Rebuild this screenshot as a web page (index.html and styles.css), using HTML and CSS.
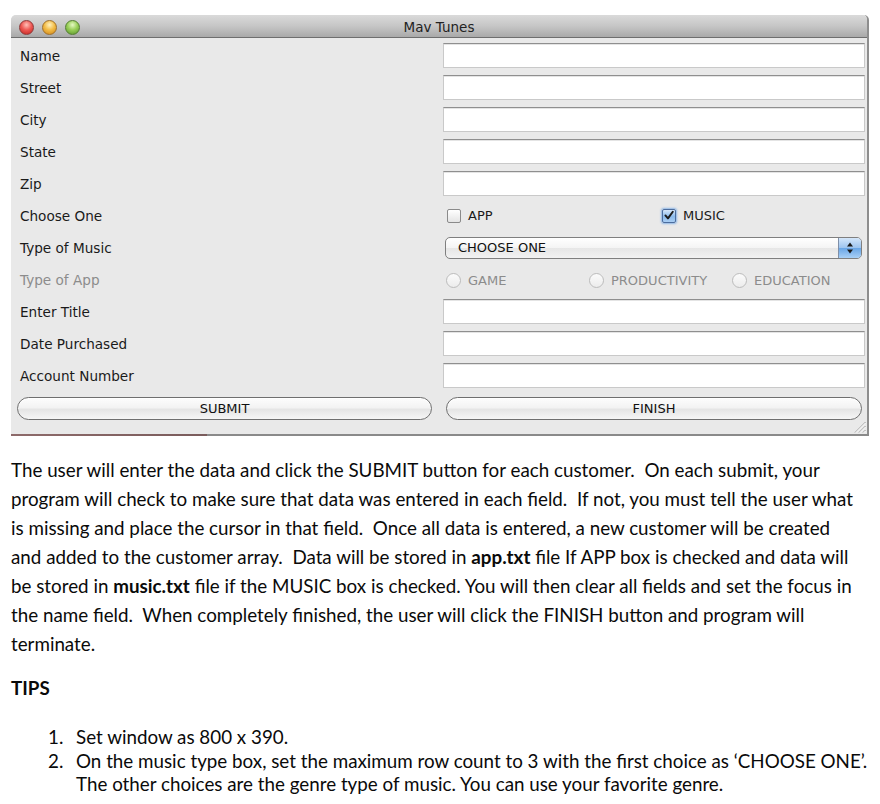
FILE: index.html
```
<!DOCTYPE html>
<html lang="en">
<head>
<meta charset="utf-8">
<title>Mav Tunes</title>
<link rel="stylesheet" href="styles.css">
</head>
<body>
<div class="page">
  <div class="window">
    <div class="titlebar">
      <div class="lights">
        <span class="light red"></span>
        <span class="light yellow"></span>
        <span class="light green"></span>
      </div>
      <div class="title">Mav Tunes</div>
      <div></div>
    </div>
    <div class="form">
      <div class="row"><span class="lbl">Name</span><div class="field"></div></div>
      <div class="row"><span class="lbl">Street</span><div class="field"></div></div>
      <div class="row"><span class="lbl">City</span><div class="field"></div></div>
      <div class="row"><span class="lbl">State</span><div class="field"></div></div>
      <div class="row"><span class="lbl">Zip</span><div class="field"></div></div>
      <div class="row">
        <span class="lbl">Choose One</span>
        <div class="checks">
          <span class="opt"><span class="cb"></span>APP</span>
          <span class="opt"><span class="cb checked"><svg viewBox="0 0 13 13" width="13" height="13"><path d="M2.6 6.4 L5.4 9.6 L10.6 2.4" fill="none" stroke="#1c1c1c" stroke-width="2.1" stroke-linecap="round" stroke-linejoin="round"/></svg></span>MUSIC</span>
        </div>
      </div>
      <div class="row">
        <span class="lbl">Type of Music</span>
        <div class="combo">
          <span class="combo-text">CHOOSE ONE</span>
          <span class="stepper"><svg viewBox="0 0 22 20" width="22" height="20"><path d="M11 4.5 L14 8.5 L8 8.5 Z" fill="#1a1a1a"/><path d="M11 15.5 L14 11.5 L8 11.5 Z" fill="#1a1a1a"/></svg></span>
        </div>
      </div>
      <div class="row">
        <span class="lbl disabled">Type of App</span>
        <div class="radios">
          <span class="opt disabled"><span class="rb"></span>GAME</span>
          <span class="opt disabled"><span class="rb"></span>PRODUCTIVITY</span>
          <span class="opt disabled"><span class="rb"></span>EDUCATION</span>
        </div>
      </div>
      <div class="row"><span class="lbl">Enter Title</span><div class="field"></div></div>
      <div class="row"><span class="lbl">Date Purchased</span><div class="field"></div></div>
      <div class="row"><span class="lbl">Account Number</span><div class="field"></div></div>
      <div class="buttons">
        <button class="btn" type="button">SUBMIT</button>
        <button class="btn" type="button">FINISH</button>
      </div>
    </div>
    <svg class="grip" viewBox="0 0 12 12" width="12" height="12">
      <path d="M11.5 1 L1 11.5 M11.5 5 L5 11.5 M11.5 9 L9 11.5" stroke="#9a9a9a" stroke-width="1"/>
      <path d="M11.5 2 L2 11.5 M11.5 6 L6 11.5 M11.5 10 L10 11.5" stroke="#fafafa" stroke-width="1"/>
    </svg>
  </div>
  <div class="desk-strip"></div>

  <div class="doc">
    <div class="para">
      <div class="line">The user will enter the data and click the SUBMIT button for each customer.  On each submit, your</div>
      <div class="line">program will check to make sure that data was entered in each field.  If not, you must tell the user what</div>
      <div class="line">is missing and place the cursor in that field.  Once all data is entered, a new customer will be created</div>
      <div class="line">and added to the customer array.  Data will be stored in <b>app.txt</b> file If APP box is checked and data will</div>
      <div class="line">be stored in <b>music.txt</b> file if the MUSIC box is checked. You will then clear all fields and set the focus in</div>
      <div class="line">the name field.  When completely finished, the user will click the FINISH button and program will</div>
      <div class="line">terminate.</div>
    </div>
    <div class="tips">TIPS</div>
    <ol class="list">
      <li class="item"><span class="num">1.</span><span class="txt">Set window as 800 x 390.</span></li>
      <li class="item"><span class="num">2.</span><span class="txt"><span class="line">On the music type box, set the maximum row count to 3 with the first choice as ‘CHOOSE ONE’.</span><span class="line">The other choices are the genre type of music. You can use your favorite genre.</span></span></li>
    </ol>
  </div>
</div>
</body>
</html>
```
FILE: styles.css
```
html, body {
  margin: 0;
  padding: 0;
  background: #ffffff;
}

.page {
  padding: 15px 0 0 11px;
}

.window {
  position: relative;
  width: 856px;
  background: #e9e9e9;
  border-right: 2px solid #8e8e8e;
  border-radius: 5px 5px 0 0;
  font-family: "DejaVu Sans", sans-serif;
  font-size: 13px;
  color: #1a1a1a;
}

.titlebar {
  height: 22px;
  border-bottom: 1px solid #6e6e6e;
  border-radius: 5px 5px 0 0;
  background: linear-gradient(#dadada, #c6c6c6 50%, #a9a9a9);
  display: grid;
  grid-template-columns: 1fr auto 1fr;
  align-items: center;
}

.lights {
  display: flex;
  gap: 8px;
  padding-left: 8px;
  padding-top: 2px;
}

.light {
  width: 15px;
  height: 15px;
  border-radius: 50%;
  box-sizing: border-box;
}

.light.red {
  background: radial-gradient(circle at 50% 30%, #ffc0b8 0, #ee5a55 45%, #c0201b 100%);
  border: 1px solid #8f3a3a;
}

.light.yellow {
  background: radial-gradient(circle at 50% 30%, #fff2c0 0, #f3bd48 45%, #cf8416 100%);
  border: 1px solid #a0702a;
}

.light.green {
  background: radial-gradient(circle at 50% 30%, #e6f8c4 0, #99cf58 45%, #58922a 100%);
  border: 1px solid #557f33;
}

.title {
  font-size: 13.5px;
  color: #222;
  padding-top: 2px;
}

.form {
  padding: 5px 0 14px 0;
  display: flex;
  flex-direction: column;
  gap: 7px;
}

.row {
  display: grid;
  grid-template-columns: 432px 422px;
  height: 25px;
  align-items: center;
}

.lbl {
  padding-left: 9px;
  padding-top: 1px;
  font-size: 13.6px;
}

.lbl.disabled {
  color: #8c8c8c;
}

.field {
  height: 25px;
  box-sizing: border-box;
  background: #ffffff;
  border: 1px solid #c9c9c9;
  border-top-color: #8f8f8f;
  box-shadow: inset 0 1px 0 #e4e4e4;
}

.checks {
  display: grid;
  grid-template-columns: 215px auto;
  padding-left: 4px;
  align-items: center;
}

.opt {
  display: flex;
  align-items: center;
  gap: 7px;
}

.opt.disabled {
  color: #8c8c8c;
}

.cb {
  width: 14px;
  height: 14px;
  box-sizing: border-box;
  border: 1px solid #8a8a8a;
  border-radius: 2px;
  background: linear-gradient(#ffffff, #e4e4e4);
  display: flex;
  align-items: center;
  justify-content: center;
}

.cb.checked {
  border-color: #4c6d9e;
  background: linear-gradient(#d6e7fa, #8bbbec 55%, #a9cdf3);
  box-shadow: 0 0 2px 1px #8db6e6;
}

.combo {
  margin-left: 2px;
  width: 417px;
  height: 22px;
  box-sizing: border-box;
  border: 1px solid #7f7f7f;
  border-radius: 5px;
  background: linear-gradient(#ffffff, #f4f4f4 50%, #e6e6e6 51%, #f2f2f2);
  display: flex;
  align-items: center;
  overflow: hidden;
}

.combo-text {
  flex: 1;
  padding-left: 12px;
  color: #111;
}

.stepper {
  width: 22px;
  height: 20px;
  border-left: 1px solid #7f8fa8;
  background: linear-gradient(#d4e6fa, #9ec5ef 48%, #6aa6e6 52%, #a8d0f6);
  display: flex;
}

.radios {
  display: grid;
  grid-template-columns: 143px 143px auto;
  padding-left: 3px;
  padding-top: 1px;
  align-items: center;
}

.rb {
  width: 15px;
  height: 15px;
  box-sizing: border-box;
  border: 1px solid #bcbcbc;
  border-radius: 50%;
  background: linear-gradient(#fbfbfb, #ececec);
}

.buttons {
  display: grid;
  grid-template-columns: 415px 416px;
  gap: 14px;
  padding-left: 6px;
  margin-top: 2px;
}

.btn {
  height: 23px;
  box-sizing: border-box;
  border: 1px solid #6f6f6f;
  border-radius: 12px;
  background: linear-gradient(#fdfdfd, #f3f3f3 45%, #e5e5e5 55%, #f6f6f6);
  box-shadow: inset 0 1px 1px #ffffff;
  font-family: "DejaVu Sans", sans-serif;
  font-size: 13px;
  color: #111;
  padding: 0;
}

.grip {
  position: absolute;
  right: 1px;
  bottom: 1px;
}

.desk-strip {
  width: 858px;
  height: 2px;
  background: linear-gradient(to right, #8d6a6a 0, #7a5c5c 196px, #8a8a8a 196px, #8a8a8a);
}

.doc {
  font-family: Lato, "Open Sans", sans-serif;
  font-size: 18.8px;
  color: #0a0a0a;
  padding-top: 19px;
}

.para .line {
  white-space: pre;
  line-height: 29px;
}

.tips {
  font-weight: bold;
  line-height: 29px;
  margin-top: 15px;
}

.list {
  list-style: none;
  margin: 23px 0 0 0;
  padding: 0 0 0 37px;
}

.item {
  display: grid;
  grid-template-columns: 28px auto;
  line-height: 23.5px;
}

.item .txt .line {
  display: block;
  white-space: pre;
}
```
